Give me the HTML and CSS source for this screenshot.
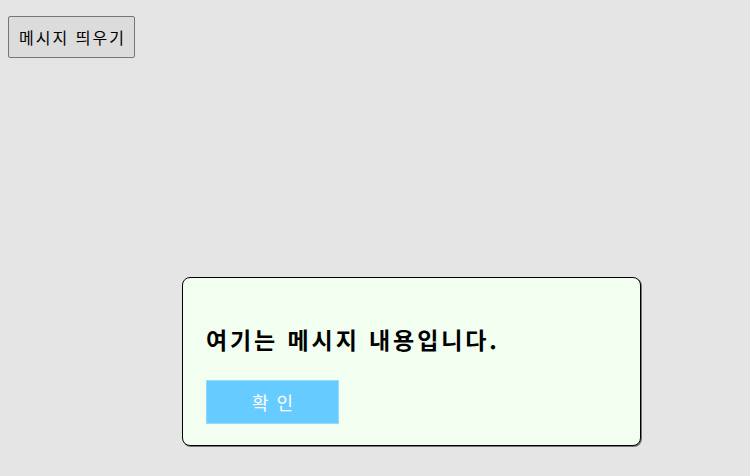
FILE: index.html
```html
<!DOCTYPE html>
<html lang="ko">
<head>
<meta charset="utf-8">
<link rel="stylesheet" href="styles.css">
</head>
<body>
<button class="open-btn">메시지 띄우기</button>
<div class="dialog">
  <p class="dialog-msg">여기는 메시지 내용입니다.</p>
  <button class="ok-btn">확 인</button>
</div>
</body>
</html>
```
FILE: styles.css
```css
html, body {
  margin: 0;
  padding: 0;
  background: #e5e5e5;
  font-family: "Noto Sans CJK KR", "Noto Sans", sans-serif;
}
body {
  padding: 16px 8px;
  height: 476px;
  box-sizing: border-box;
}
.open-btn {
  width: 127px;
  height: 42px;
  font-family: "Noto Sans CJK KR", sans-serif;
  font-size: 16px;
  letter-spacing: 2px;
  text-indent: 2px;
  color: #000;
  background: #dcdcdc;
  border: 1px solid #767676;
  border-radius: 2px;
  padding: 0;
}
.dialog {
  position: absolute;
  left: 182px;
  top: 277px;
  width: 459px;
  height: 169px;
  box-sizing: border-box;
  background: #f2fff0;
  border: 1px solid #000;
  border-radius: 8px;
  box-shadow: 1px 1px 0 #777;
  padding: 44px 23px 0;
  display: flex;
  flex-direction: column;
  align-items: flex-start;
}
.dialog-msg {
  margin: 0;
  font-size: 23px;
  font-weight: bold;
  letter-spacing: 2.9px;
  line-height: 34px;
  color: #000;
}
.ok-btn {
  margin-top: 24px;
  width: 133px;
  height: 44px;
  background: #66ccff;
  border: 1px solid #8fdcff;
  color: #fff;
  font-family: "Noto Sans CJK KR", sans-serif;
  font-size: 18px;
  letter-spacing: 1.5px;
  text-indent: 1.5px;
  padding: 0;
}
```
